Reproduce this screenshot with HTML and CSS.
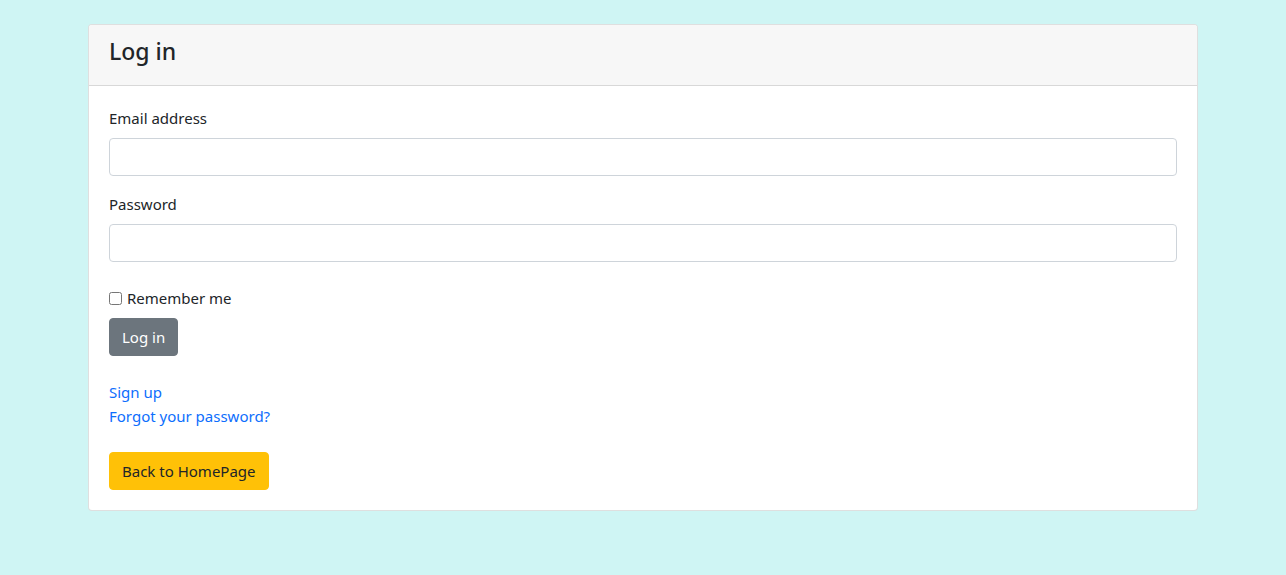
FILE: index.html
```html
<!DOCTYPE html>
<html lang="en">
<head>
<meta charset="utf-8">
<title>Log in</title>
<link rel="stylesheet" href="styles.css">
</head>
<body>
<div class="container">
  <div class="card">
    <div class="card-header">
      <h4 class="title">Log in</h4>
    </div>
    <div class="card-body">
      <form class="form">
        <div class="field">
          <label class="label" for="email">Email address</label>
          <input class="input" id="email" type="email">
        </div>
        <div class="field">
          <label class="label" for="password">Password</label>
          <input class="input" id="password" type="password">
        </div>
        <div class="remember">
          <input class="check" id="remember" type="checkbox">
          <label for="remember">Remember me</label>
        </div>
        <div class="actions">
          <button class="btn btn-secondary" type="button">Log in</button>
        </div>
      </form>
      <div class="links">
        <a href="#">Sign up</a><br>
        <a href="#">Forgot your password?</a>
      </div>
      <a class="btn btn-warning" href="#">Back to HomePage</a>
    </div>
  </div>
</div>
</body>
</html>
```

FILE: styles.css
```css
* { box-sizing: border-box; }
html, body { margin: 0; padding: 0; }
body {
  background: #cff5f4;
  font-family: "Noto Sans", "Open Sans", sans-serif;
  font-size: 15px;
  line-height: 24px;
  color: #212529;
}
.container {
  width: 1140px;
  margin: 0 auto;
  padding: 24px 15px;
}
.card {
  background: #fff;
  border: 1px solid rgba(0,0,0,.125);
  border-radius: 4px;
  overflow: hidden;
}
.card-header {
  background: #f7f7f7;
  border-bottom: 1px solid rgba(0,0,0,.125);
  padding: 12px 20px;
}
.title {
  margin: 0 0 8px;
  font-size: 23px;
  font-weight: 500;
  line-height: 28px;
}
.card-body { padding: 20px; }
.form { margin: 0; }
.field { margin-bottom: 16px; }
.label { display: block; margin-bottom: 8px; }
.input {
  display: block;
  width: 100%;
  height: 38px;
  padding: 6px 12px;
  font: inherit;
  border: 1px solid #ced4da;
  border-radius: 4px;
  background: #fff;
}
.remember {
  margin-top: 24px;
  display: flex;
  align-items: center;
  gap: 5px;
  height: 24px;
}
.check { margin: 0; width: 13px; height: 13px; }
.actions { margin-top: 8px; }
.btn {
  display: inline-block;
  height: 38px;
  padding: 6px 12px;
  font: inherit;
  line-height: 24px;
  border: 1px solid transparent;
  border-radius: 4px;
  text-decoration: none;
  cursor: pointer;
}
.btn-secondary { background: #6c757d; border-color: #6c757d; color: #fff; }
.btn-warning { background: #ffc107; border-color: #ffc107; color: #212529; }
.links { margin: 24px 0; }
.links a { color: #0d6efd; text-decoration: none; }
```
